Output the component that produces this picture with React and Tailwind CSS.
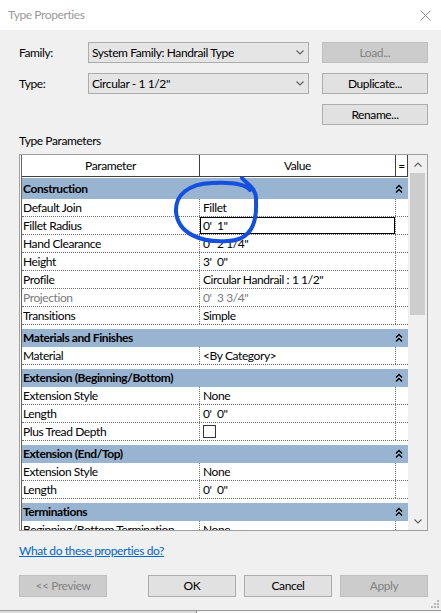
import React from "react";

const groups = [
  {
    name: "Construction",
    first: true,
    rows: [
      { p: "Default Join", v: "Fillet" },
      { p: "Fillet Radius", v: `0'  1"`, edit: true },
      { p: "Hand Clearance", v: `0'  2 1/4"` },
      { p: "Height", v: `3'  0"` },
      { p: "Profile", v: 'Circular Handrail : 1 1/2"' },
      { p: "Projection", v: `0'  3 3/4"`, dim: true },
      { p: "Transitions", v: "Simple" },
    ],
  },
  { name: "Materials and Finishes", rows: [{ p: "Material", v: "<By Category>" }] },
  {
    name: "Extension (Beginning/Bottom)",
    rows: [
      { p: "Extension Style", v: "None" },
      { p: "Length", v: `0'  0"` },
      { p: "Plus Tread Depth", check: true },
    ],
  },
  {
    name: "Extension (End/Top)",
    rows: [
      { p: "Extension Style", v: "None" },
      { p: "Length", v: `0'  0"` },
    ],
  },
  { name: "Terminations", rows: [{ p: "Beginning/Bottom Termination", v: "None" }] },
];

function Chevron({ up, className }) {
  return (
    <svg width="8" height="5" viewBox="0 0 8 5" className={className}>
      <path d={up ? "M0.5 4.5 L4 1 L7.5 4.5" : "M0.5 0.5 L4 4 L7.5 0.5"} fill="none" stroke="currentColor" strokeWidth="1.1" />
    </svg>
  );
}

function Collapse() {
  return (
    <svg width="8" height="10" viewBox="0 0 8 10">
      <path d="M1 4.5 L4 1.5 L7 4.5 M1 8.5 L4 5.5 L7 8.5" fill="none" stroke="#000" strokeWidth="1.3" />
    </svg>
  );
}

function Btn({ children, disabled, w = "w-[106px]" }) {
  return (
    <div
      className={`${w} h-full flex items-center justify-center border ${
        disabled ? "bg-[#cccccc] border-[#bfbfbf] text-[#838383]" : "bg-[#e1e1e1] border-[#adadad] text-black"
      }`}
    >
      {children}
    </div>
  );
}

function Combo({ children }) {
  return (
    <div className="w-[221px] h-full bg-[#e5e5e5] border border-[#acacac] flex items-center justify-between pl-[3px] pr-[4px]">
      <span>{children}</span>
      <Chevron className="text-[#606060]" />
    </div>
  );
}

function Row({ row }) {
  return (
    <div className="flex h-[18px] border-b border-dotted border-[#6f6f6f]">
      <div className={`w-[178px] pl-[1px] flex items-center whitespace-nowrap border-r border-dotted border-[#6f6f6f] ${row.dim ? "text-[#7a7a7a]" : ""}`}>
        {row.p}
      </div>
      <div
        className={`w-[196px] flex items-center whitespace-pre border-r border-dotted border-[#6f6f6f] ${
          row.dim ? "text-[#7a7a7a]" : ""
        }`}
      >
        {row.edit ? (
          <div className="w-full h-full border border-black flex items-center pl-[2px]">{row.v}</div>
        ) : row.check ? (
          <div className="ml-[3px] w-[13px] h-[13px] border border-[#333] bg-white" />
        ) : (
          <span className="pl-[3px]">{row.v}</span>
        )}
      </div>
      <div className="w-[11px]" />
    </div>
  );
}

export default function App() {
  return (
    <div className="relative w-[441px] h-[613px] overflow-hidden bg-[#f0f0f0] text-[12px] tracking-[-0.4px] text-black [font-family:Lato,'Noto_Sans',sans-serif]">
      {/* title bar */}
      <div className="h-[30px] bg-white flex items-center justify-between pl-[8px] pr-[10px]">
        <span className="text-[#999999]">Type Properties</span>
        <svg width="11" height="11" viewBox="0 0 11 11">
          <path d="M0.5 0.5 L10.5 10.5 M10.5 0.5 L0.5 10.5" stroke="#8a8a8a" strokeWidth="1" />
        </svg>
      </div>

      {/* body */}
      <div className="h-[580px] pl-[19px] pr-[13px] pt-[12px]">
        <div className="flex h-[21px] items-center">
          <div className="w-[69px]">Family:</div>
          <Combo>System Family: Handrail Type</Combo>
          <div className="ml-[13px] h-full">
            <Btn disabled>Load...</Btn>
          </div>
        </div>
        <div className="flex h-[21px] items-center mt-[10px]">
          <div className="w-[69px]">Type:</div>
          <Combo>Circular - 1 1/2"</Combo>
          <div className="ml-[13px] h-full">
            <Btn>Duplicate...</Btn>
          </div>
        </div>
        <div className="flex h-[21px] justify-end mt-[10px]">
          <Btn>Rename...</Btn>
        </div>

        <div className="mt-[8px] h-[16px] flex items-center">Type Parameters</div>

        {/* parameters grid */}
        <div className="mt-[5px] h-[377px] border border-[#a0a0a0] bg-white flex overflow-hidden">
          <div className="ml-[1px] w-[387px] border-l border-[#646464] flex flex-col">
            <div className="flex shrink-0 h-[22px] border-b border-[#404040]">
              <div className="w-[178px] flex items-center justify-center border-r border-[#404040]">Parameter</div>
              <div className="w-[196px] flex items-center justify-center border-r border-[#404040]">Value</div>
              <div className="w-[12px] flex items-center justify-center border-r border-[#404040]">=</div>
            </div>
            {groups.map((g) => (
              <div key={g.name} className={`shrink-0 ${g.first ? "mt-[1px]" : "mt-[4px]"}`}>
                <div className={`${g.first ? "h-[21px]" : "h-[18px]"} bg-[#99b4d1] flex items-center justify-between pl-[1px] pr-[5px]`}>
                  <span className="font-bold">{g.name}</span>
                  <Collapse />
                </div>
                {g.rows.map((r, i) => (
                  <Row key={i} row={r} />
                ))}
              </div>
            ))}
          </div>
          {/* scrollbar */}
          <div className="w-[19px] bg-[#f0f0f0] flex flex-col">
            <div className="h-[18px] flex items-center justify-center text-[#606060]">
              <Chevron up />
            </div>
            <div className="ml-[2px] w-[15px] h-[142px] bg-[#cdcdcd]" />
            <div className="flex-1" />
            <div className="h-[18px] flex items-center justify-center text-[#606060]">
              <Chevron />
            </div>
          </div>
        </div>

        <div className="mt-[12px] h-[16px] flex items-center">
          <span className="text-[#0066cc] underline">What do these properties do?</span>
        </div>

        <div className="mt-[16px] h-[22px] flex">
          <Btn disabled w="w-[88px]">&lt;&lt; Preview</Btn>
          <div className="flex-1" />
          <div className="flex gap-[8px]">
            <Btn w="w-[88px]">OK</Btn>
            <Btn w="w-[88px]">Cancel</Btn>
            <Btn disabled w="w-[88px]">Apply</Btn>
          </div>
        </div>
      </div>

      {/* window below the dialog */}
      <div className="h-[3px] border-t border-[#9a9a9a] flex">
        <div className="w-[197px] bg-[#dcdcdc] border-r border-[#8a8a8a]" />
        <div className="flex-1 bg-[#f8f8f8]" />
      </div>

      {/* resize grip */}
      <svg className="absolute left-[431px] top-[600px]" width="9" height="9" viewBox="0 0 9 9">
        <g fill="#b5b5b5">
          <rect x="6" y="0" width="2" height="2" />
          <rect x="3" y="3" width="2" height="2" />
          <rect x="6" y="3" width="2" height="2" />
          <rect x="0" y="6" width="2" height="2" />
          <rect x="3" y="6" width="2" height="2" />
          <rect x="6" y="6" width="2" height="2" />
        </g>
      </svg>

      {/* hand-drawn annotation */}
      <svg className="absolute left-0 top-0 pointer-events-none" width="441" height="613">
        <path
          d="M242 178 C247 184 257 188 256 201 C257 222 252 240 228 241 C200 243 178 233 176 212 C175 195 188 184 212 183 C230 182 245 184 250 190"
          fill="none"
          stroke="#1450e0"
          strokeWidth="4"
          strokeLinecap="round"
        />
      </svg>
    </div>
  );
}
